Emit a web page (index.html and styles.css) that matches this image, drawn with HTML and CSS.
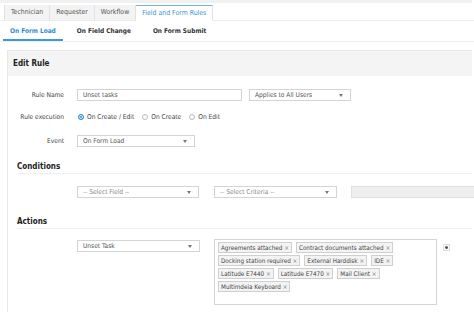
FILE: index.html
```html
<!DOCTYPE html>
<html lang="en">

<head>
  <meta charset="UTF-8">
  <meta name="viewport" content="width=device-width, initial-scale=1.0">
  <title>Field and Form Rules</title>
  <link rel="stylesheet" href="styles.css">
</head>

<body>
  <div class="topbar"></div>

  <!-- main tabs -->
  <ul class="tabs">
    <li>Technician</li>
    <li>Requester</li>
    <li>Workflow</li>
    <li class="active">Field and Form Rules</li>
  </ul>

  <!-- sub tabs -->
  <ul class="subtabs">
    <li class="active">On Form Load</li>
    <li>On Field Change</li>
    <li>On Form Submit</li>
  </ul>

  <div class="panel">
    <div class="panel-head">Edit Rule</div>

    <div class="row first">
      <label>Rule Name</label>
      <div class="field name">Unset tasks</div>
      <div class="field select users">Applies to All Users</div>
    </div>

    <div class="row exec">
      <label>Rule execution</label>
      <div class="radios">
        <span class="radio checked"></span><span class="opt">On Create / Edit</span>
        <span class="radio"></span><span class="opt">On Create</span>
        <span class="radio"></span><span class="opt">On Edit</span>
      </div>
    </div>

    <div class="row event">
      <label>Event</label>
      <div class="field select evt">On Form Load</div>
    </div>

    <h3 class="section">Conditions</h3>
    <div class="row cond">
      <label></label>
      <div class="field select placeholder fieldsel">-- Select Field --</div>
      <div class="field select placeholder criteria">-- Select Criteria --</div>
      <div class="field grey"></div>
    </div>

    <h3 class="section actions">Actions</h3>
    <div class="row act">
      <label></label>
      <div class="field select task">Unset Task</div>
      <div class="multi">
        <span class="tag">Agreements attached <i>×</i></span>
        <span class="tag">Contract documents attached <i>×</i></span>
        <span class="tag">Docking station required <i>×</i></span>
        <span class="tag">External Harddisk <i>×</i></span>
        <span class="tag">IDE <i>×</i></span>
        <span class="tag">Latitude E7440 <i>×</i></span>
        <span class="tag">Latitude E7470 <i>×</i></span>
        <span class="tag">Mail Client <i>×</i></span>
        <span class="tag">Multimdeia Keyboard <i>×</i></span>
      </div>
      <span class="add"></span>
    </div>
  </div>
</body>

</html>
```

FILE: styles.css
```css
* {
  margin: 0;
  padding: 0;
  list-style: none;
  box-sizing: border-box;
}

body {
  width: 474px;
  height: 312px;
  overflow: hidden;
  background: #fff;
  color: #444;
  font-family: "DejaVu Sans Condensed", "DejaVu Sans", sans-serif;
  font-size: 6.6px;
}

.topbar {
  height: 3px;
  margin-right: 2px;
  background: #f1f1f1;
}

/* tabs */
.tabs {
  display: flex;
  height: 18px;
  padding: 2px 0 0 4px;
  border-bottom: 1px solid #ececec;
  font-size: 6.9px;
}

.tabs li {
  height: 16px;
  line-height: 14px;
  padding: 0 6px;
  background: #f3f3f3;
  border-right: 1px solid #e2e2e2;
  border-bottom: 1px solid #ececec;
  color: #555;
}

.tabs li:first-child {
  border-left: 1px solid #e2e2e2;
}

.tabs li.active {
  background: #fff;
  border-top: 1px solid #74b4e4;
  border-bottom-color: #fff;
  color: #3a94d4;
}

/* sub tabs */
.subtabs {
  display: flex;
  gap: 6px;
  height: 21px;
  padding-left: 3px;
  border-bottom: 1px solid #efefef;
}

.subtabs li {
  padding: 0 7px;
  line-height: 20px;
  font-size: 6.5px;
  font-weight: bold;
  color: #333;
  border-bottom: 2px solid transparent;
}

.subtabs li + li {
  padding: 0 8px;
}

.subtabs li.active {
  color: #2f8dd1;
  border-bottom-color: #3d9ad9;
}

/* panel */
.panel {
  margin: 8px 2px 0 7px;
  height: 270px;
  border-left: 1px solid #e8e8e8;
  border-top: 1px solid #e8e8e8;
}

.panel-head {
  height: 25px;
  line-height: 25px;
  padding-left: 5px;
  background: #f4f4f4;
  font-size: 8px;
  font-weight: bold;
  color: #222;
}

.row {
  display: flex;
  align-items: center;
  height: 12px;
}

.row label {
  width: 56px;
  margin-right: 13px;
  text-align: right;
  color: #444;
}

.row.first { margin-top: 13px; }
.row.exec { margin-top: 10px; }
.row.event { margin-top: 12px; }
.row.cond { margin-top: 12px; }
.row.act {
  margin-top: 10px;
  height: auto;
  align-items: flex-start;
}

.field {
  height: 12px;
  line-height: 10px;
  padding: 0 5px;
  border: 1px solid #d4d4d4;
  background: #fff;
  color: #555;
  white-space: nowrap;
}

.select {
  display: flex;
  justify-content: space-between;
  align-items: center;
}

/* arrow of a select */
.select::after {
  content: "";
  border-top: 3px solid #777;
  border-left: 2px solid transparent;
  border-right: 2px solid transparent;
  margin-right: 2px;
}

.placeholder { color: #888; }

.name { width: 165px; }
.users { width: 102px; margin-left: 7px; }
.evt { width: 118px; }
.fieldsel { width: 122px; }
.criteria { width: 123px; margin-left: 15px; }
.grey {
  width: 124px;
  margin-left: 14px;
  margin-right: -4px;
  background: #efefef;
  border-color: #e0e0e0;
}
.task { width: 123px; margin-top: 1px; }

/* radios */
.radios {
  display: flex;
  align-items: center;
  padding-left: 1px;
}

.radio {
  width: 6px;
  height: 6px;
  border: 1px solid #bbb;
  border-radius: 50%;
  margin-right: 3px;
}

.radio.checked {
  border-color: #2f8dd1;
  background: #2f8dd1;
  box-shadow: inset 0 0 0 1px #fff;
}

.opt {
  margin-right: 8px;
  color: #444;
}

/* headings */
.section {
  margin: 14px 0 0 9px;
  height: 13px;
  line-height: 12px;
  font-size: 8px;
  font-weight: bold;
  color: #222;
  border-bottom: 1px solid #f0f0f0;
}

.section.actions { margin-top: 18px; }

/* multi select */
.multi {
  width: 223px;
  height: 66px;
  margin-left: 14px;
  padding: 2px 3px;
  border: 1px solid #d4d4d4;
  display: flex;
  flex-wrap: wrap;
  align-content: flex-start;
  gap: 2px 4px;
  font-size: 6.3px;
}

.tag {
  height: 11px;
  line-height: 9px;
  padding: 0 2px;
  border: 1px solid #cfcfcf;
  background: #f3f3f3;
  color: #444;
  white-space: nowrap;
}

.tag i {
  font-style: normal;
  color: #888;
}

.add {
  width: 7px;
  height: 7px;
  margin: 5px 0 0 6px;
  border: 1px solid #ddd;
  background: radial-gradient(circle, #555 1.2px, #fafafa 1.6px);
}
```
